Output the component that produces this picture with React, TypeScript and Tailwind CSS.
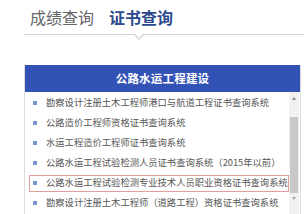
const items = [
  '勘察设计注册土木工程师港口与航道工程证书查询系统',
  '公路造价工程师资格证书查询系统',
  '水运工程造价工程师证书查询系统',
  '公路水运工程试验检测人员证书查询系统（2015年以前）',
  '公路水运工程试验检测专业技术人员职业资格证书查询系统',
  '勘察设计注册土木工程师（道路工程）资格证书查询系统',
];

export default function App() {
  return (
    <div
      className="w-[304px] h-[214px] bg-white overflow-hidden"
      style={{ fontFamily: '"Noto Sans CJK SC", "Noto Sans", sans-serif' }}
    >
      {/* tabs */}
      <div className="relative ml-[24px] h-[35px] border-b border-[#d4d4d4] flex items-center gap-[15px] pl-[6px] pb-[1px]">
        <span className="text-[16px] leading-none text-[#666]">成绩查询</span>
        <span className="text-[16px] leading-none font-bold text-[#2b4a8b]">证书查询</span>
        <div className="absolute left-[109px] top-[34px] w-0 h-0 border-l-[6px] border-r-[6px] border-t-[6px] border-l-transparent border-r-transparent border-t-[#d4d4d4]" />
        <div className="absolute left-[110px] top-[33px] w-0 h-0 border-l-[5px] border-r-[5px] border-t-[5px] border-l-transparent border-r-transparent border-t-white" />
      </div>

      {/* panel */}
      <div className="mt-[30px] ml-[24px] w-[277px] h-[150px] border border-[#dcdcdc] border-t-0 flex flex-col">
        <div className="h-[27px] bg-[#3352b6] flex items-center justify-center">
          <span className="text-[11.5px] font-bold text-white leading-none tracking-[0.2px]">公路水运工程建设</span>
        </div>
        <div className="flex flex-1">
          <ul className="flex-1 pt-[1px]">
            {items.map((t, i) => (
              <li key={i} className="h-[20px] flex items-center">
                <div
                  className={
                    i === 4
                      ? 'flex items-center h-[17px] w-full ml-[4px] border border-[#e0a0a0] pl-[3px]'
                      : 'flex items-center h-[17px] w-full ml-[4px] border border-transparent pl-[3px]'
                  }
                >
                  <span className="w-[4px] h-[4px] bg-[#7b95cf] shrink-0" />
                  <span className="ml-[9px] text-[9.3px] leading-none text-[#555] whitespace-nowrap">{t}</span>
                </div>
              </li>
            ))}
          </ul>
          <div className="w-[10px] bg-[#f1f1f1] flex flex-col items-center mr-[1px]">
            <div className="h-[12px] flex items-center">
              <div className="w-0 h-0 border-l-[2px] border-r-[2px] border-b-[3px] border-l-transparent border-r-transparent border-b-[#888]" />
            </div>
            <div className="mt-[13px] h-[76px] w-[8px] bg-[#c8c8c8]" />
            <div className="h-[10px] flex items-center">
              <div className="w-0 h-0 border-l-[2px] border-r-[2px] border-t-[3px] border-l-transparent border-r-transparent border-t-[#aaa]" />
            </div>
          </div>
        </div>
      </div>
    </div>
  );
}
